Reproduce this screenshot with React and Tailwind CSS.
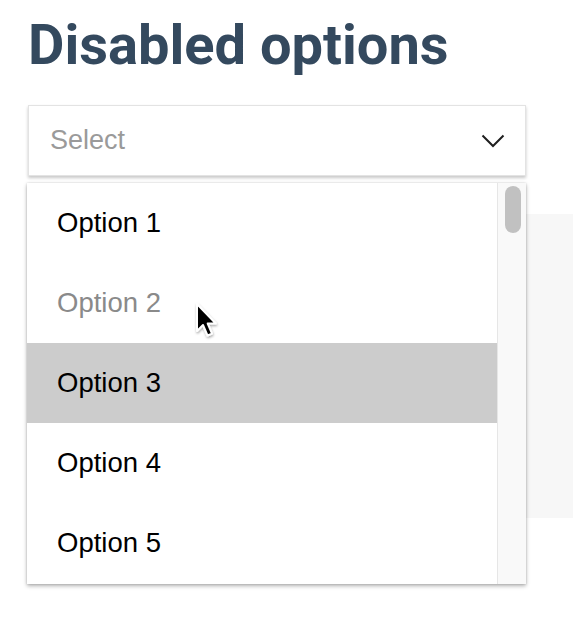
import React from "react";

export default function App() {
  const options = [
    { label: "Option 1" },
    { label: "Option 2", disabled: true },
    { label: "Option 3", active: true },
    { label: "Option 4" },
    { label: "Option 5" },
  ];
  return (
    <div className="relative min-h-[617px] w-[573px] overflow-hidden bg-white pl-[28px]">
      <h1
        className="mt-[12px] text-[56px] font-bold leading-[67px] text-[#34495e]"
        style={{ fontFamily: "Roboto, sans-serif" }}
      >
        Disabled options
      </h1>
      <div className="relative mt-[26px] w-[498px]">
        <div
          className="flex h-[71px] items-center justify-between border border-[#e3e3e3] bg-white pl-[21px] pr-[20px] shadow-[0_2px_3px_rgba(0,0,0,0.22)]"
          style={{ fontFamily: '"Liberation Sans", Arial, sans-serif' }}
        >
          <span className="text-[27px] text-[#9a9a9a]">Select</span>
          <svg width="24" height="14" viewBox="0 0 24 14" fill="none" className="mt-[0px]">
            <path d="M1.5 1.5 L12 12 L22.5 1.5" stroke="#1f1f1f" strokeWidth="2" />
          </svg>
        </div>
        <div
          className="absolute left-[-1px] top-[78px] z-10 flex h-[401px] w-[499px] bg-white shadow-[0_2px_4px_rgba(0,0,0,0.3),0_0_2px_rgba(0,0,0,0.15)]"
          style={{ fontFamily: '"Liberation Sans", Arial, sans-serif' }}
        >
          <div className="flex flex-1 flex-col">
            {options.map((o) => (
              <div
                key={o.label}
                className={`flex h-[80px] items-center pl-[30px] text-[27.5px] ${
                  o.active ? "bg-[#cccccc] text-black" : "bg-white"
                } ${o.disabled ? "text-[#8a8a8a]" : "text-black"}`}
              >
                {o.label}
              </div>
            ))}
          </div>
          <div className="w-[29px] border-l border-[#e6e6e6] bg-[#f9f9f9] pl-[7px] pt-[3px]">
            <div className="h-[47px] w-[16px] rounded-full bg-[#c1c1c1]" />
          </div>
        </div>
      </div>
      <div className="mt-[38px] h-[304px] w-full bg-[#f7f7f7]" />
      <svg
        className="absolute left-[194px] top-[301px] z-20"
        width="32"
        height="44"
        viewBox="0 0 32 44"
      >
        <defs>
          <filter id="cs" x="-30%" y="-30%" width="160%" height="160%">
            <feDropShadow dx="0.5" dy="1.5" stdDeviation="1.2" floodColor="#000" floodOpacity="0.35" />
          </filter>
        </defs>
        <path
          d="M3 3 L3 30 L9 24 L13.5 34.5 L18 32.6 L13.7 22.5 L21.8 22.5 Z"
          fill="#000"
          stroke="#fff"
          strokeWidth="2"
          strokeLinejoin="round"
          filter="url(#cs)"
        />
      </svg>
    </div>
  );
}
